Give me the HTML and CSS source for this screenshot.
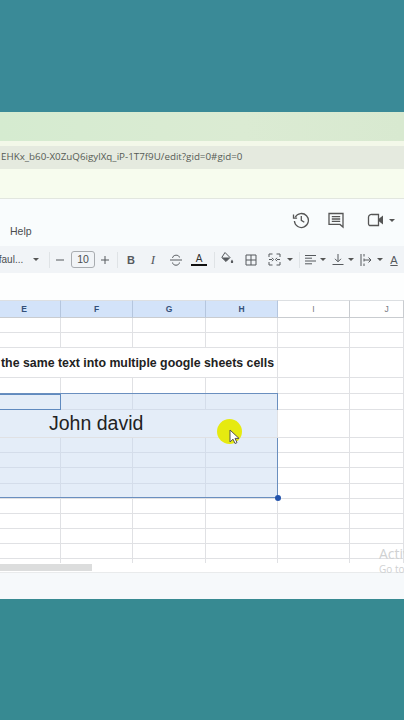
FILE: index.html
```html
<!DOCTYPE html>
<html lang="en">

<head>
    <meta charset="UTF-8">
    <meta name="viewport" content="width=device-width, initial-scale=1.0">
    <title>Google Sheets</title>
    <link rel="stylesheet" href="styles.css">
</head>

<body>
    <div class="band band-top"></div>
    <div class="window">
        <div class="tabs"></div>
        <div class="tabs-edge"></div>
        <div class="url">EHKx_b60-X0ZuQ6igylXq_iP-1T7f9U/edit?gid=0#gid=0</div>
        <div class="bookmarks"></div>

        <div class="menubar">
            <div class="help">Help</div>
            <div class="actions">
                <svg class="act-history" width="18" height="18" viewBox="0 0 18 18"><path d="M3.2 6.200A7 7 0 1 1 2.400 10" /><path d="M1.500 3.500v3.600h3.600" /><path d="M9.300 5v4.400l3 1.800" /></svg>
                <svg class="act-comment" width="18" height="18" viewBox="0 0 18 18"><path d="M2 2.500h14v13.500l-3-2.600H2z" /><path d="M4.800 5.600h8.400M4.800 8h8.400M4.800 10.400h8.400" /></svg>
                <svg class="act-video" width="18" height="18" viewBox="0 0 18 18"><path d="M6 3.500h6.500v11H3.500a2 2 0 0 1-1-1.500V6a3 3 0 0 1 3.500-2.500z" /><path class="solid" d="M12.500 8l4.500-3.500v9L12.500 10z" /></svg>
                <span class="caret act-caret"></span>
            </div>
        </div>

        <div class="toolbar">
            <span class="font-name">Defaul...</span>
            <span class="caret caret-font"></span>
            <span class="sep sep-font"></span>
            <svg class="tool t-minus" width="12" height="12" viewBox="0 0 12 12"><path d="M2 6h8" /></svg>
            <span class="size-box">10</span>
            <svg class="tool t-plus" width="12" height="12" viewBox="0 0 12 12"><path d="M2 6h8M6 2v8" /></svg>
            <span class="sep sep-plus"></span>
            <span class="glyph g-bold">B</span>
            <span class="glyph g-italic">I</span>
            <svg class="tool t-strike" width="14" height="14" viewBox="0 0 14 14"><path d="M1 7h12" /><path d="M3.600 5c0-3.600 6.800-3.600 6.800-.5M3.600 9.500c0 3.600 6.800 3.600 6.800 0" /></svg>
            <span class="glyph g-color">A</span>
            <span class="sep sep-color"></span>
            <svg class="tool t-fill" width="14" height="14" viewBox="0 0 14 14"><path d="M5 1.500L10 6.500 6 10.500 1.800 6.500z" /><path class="solid" d="M1.800 6.500H10L6 10.500z" /><path class="solid" d="M12 8.500c.8 1.200 1.200 1.800 1.200 2.400a1.200 1.200 0 0 1-2.400 0c0-.6.400-1.200 1.200-2.400z" /></svg>
            <svg class="tool t-borders" width="12" height="12" viewBox="0 0 12 12"><path d="M1 1h10v10H1zM6 1v10M1 6h10" /></svg>
            <svg class="tool t-merge" width="13" height="13" viewBox="0 0 13 13"><path d="M1 4V1h3.500M12 4V1H8.500M1 9v3h3.500M12 9v3H8.500M1 6.500h3M12 6.500H9M4 4.800L5.500 6.500 4 8.200M9 4.800L7.500 6.500 9 8.200" /></svg>
            <span class="caret caret-merge"></span>
            <span class="sep sep-merge"></span>
            <svg class="tool t-align" width="11" height="12" viewBox="0 0 11 12"><path d="M0 1.500h11M0 4.200h7M0 7h11M0 9.800h7" /></svg>
            <span class="caret caret-align"></span>
            <svg class="tool t-valign" width="12" height="13" viewBox="0 0 12 13"><path d="M6 1v7.500M3 5.800l3 3 3-3M0.500 11.500h11" /></svg>
            <span class="caret caret-valign"></span>
            <svg class="tool t-wrap" width="12" height="12" viewBox="0 0 12 12"><path d="M1 0v12M4 0v2.500M4 4.500v3M4 9.500V12M4 6h7M8.500 3.500L11 6 8.500 8.500" /></svg>
            <span class="caret caret-wrap"></span>
            <span class="glyph g-rotate">A</span>
        </div>

        <div class="gap"></div>

        <div class="sheet">
            <div class="head on head-e">E</div><div class="head on">F</div><div class="head on">G</div><div class="head on">H</div><div class="head">I</div><div class="head head-j">J</div>

            <div class="cell"></div><div class="cell"></div><div class="cell"></div><div class="cell"></div><div class="cell"></div><div class="cell"></div>
            <div class="cell"></div><div class="cell"></div><div class="cell"></div><div class="cell"></div><div class="cell"></div><div class="cell"></div>
            <div class="cell title">the same text into multiple google sheets cells</div><div class="cell"></div><div class="cell"></div>
            <div class="cell"></div><div class="cell"></div><div class="cell"></div><div class="cell"></div><div class="cell"></div><div class="cell"></div>
            <div class="cell"></div><div class="cell"></div><div class="cell"></div><div class="cell"></div><div class="cell"></div><div class="cell"></div>
            <div class="cell name">John david</div><div class="cell"></div><div class="cell"></div>
            <div class="cell"></div><div class="cell"></div><div class="cell"></div><div class="cell"></div><div class="cell"></div><div class="cell"></div>
            <div class="cell"></div><div class="cell"></div><div class="cell"></div><div class="cell"></div><div class="cell"></div><div class="cell"></div>
            <div class="cell"></div><div class="cell"></div><div class="cell"></div><div class="cell"></div><div class="cell"></div><div class="cell"></div>
            <div class="cell"></div><div class="cell"></div><div class="cell"></div><div class="cell"></div><div class="cell"></div><div class="cell"></div>
            <div class="cell"></div><div class="cell"></div><div class="cell"></div><div class="cell"></div><div class="cell"></div><div class="cell"></div>
            <div class="cell"></div><div class="cell"></div><div class="cell"></div><div class="cell"></div><div class="cell"></div><div class="cell"></div>
            <div class="cell"></div><div class="cell"></div><div class="cell"></div><div class="cell"></div><div class="cell"></div><div class="cell"></div>
            <div class="cell"></div><div class="cell"></div><div class="cell"></div><div class="cell"></div><div class="cell"></div><div class="cell"></div>
            <div class="cell end"></div><div class="cell end"></div><div class="cell end"></div><div class="cell end"></div><div class="cell end"></div><div class="cell end"></div>

            <!-- selection sits over the cells -->
            <div class="selection">
                <div class="active"></div>
                <div class="handle"></div>
            </div>
            <div class="pointer">
                <svg width="12" height="16" viewBox="0 0 12 16"><path d="M1 1v12l3-2.800 2 4.300 2-.9-2-4.200h4z" /></svg>
            </div>
        </div>

        <div class="hscroll"><div class="thumb"></div></div>
        <div class="status"></div>

        <div class="watermark">
            <div class="wm-big">Activate Windows</div>
            <div class="wm-small">Go to Settings to activate</div>
        </div>
    </div>
    <div class="band band-bottom"></div>
</body>

</html>
```

FILE: styles.css
```css
html,
body {
    margin: 0;
    overflow: hidden;
}

body {
    width: 404px;
    height: 720px;
    font-family: "Liberation Sans", Arial, sans-serif;
    background-color: #3a8a97;
}

.band {
    background-color: #3a8a97;
}

.band-top {
    height: 112px;
}

.band-bottom {
    height: 121px;
    background-color: #378a92;
}

.window {
    position: relative;
    height: 487px;
    overflow: hidden;
    background-color: #fafcfd;
}

.tabs {
    height: 29px;
    background: linear-gradient(90deg, #d5ebd0, #dbebd3 60%, #d8e9d0);
}

.tabs-edge {
    height: 5px;
    background-color: #f3f8e9;
}

.url {
    height: 23px;
    line-height: 22px;
    padding-left: 1px;
    font-family: "Open Sans", sans-serif;
    font-size: 9.800px;
    color: #555b55;
    white-space: nowrap;
    background-color: #e5eadf;
}

.bookmarks {
    height: 29px;
    background-color: #f7fcee;
    border-bottom: 1px solid #e2e6df;
}

.menubar {
    height: 47px;
    display: flex;
    justify-content: space-between;
    background-color: #f9fcfd;
}

.help {
    padding: 26px 0 0 10px;
    font-size: 10.500px;
    color: #4a4d50;
}

.actions {
    display: flex;
    align-items: flex-start;
    padding-top: 12px;
    padding-right: 9px;
}

.actions svg {
    fill: none;
    stroke: #555;
    stroke-width: 1.300;
}

.actions svg .solid {
    fill: #555;
    stroke: none;
}

.act-history {
    margin-right: 17px;
}

.act-video {
    margin-left: 21px;
}

.caret {
    width: 0;
    height: 0;
    flex: none;
    border-left: 3px solid transparent;
    border-right: 3px solid transparent;
    border-top: 3px solid #555;
}

.act-caret {
    margin: 8px 0 0 5px;
}

.toolbar {
    height: 27px;
    display: flex;
    align-items: center;
    overflow: hidden;
    white-space: nowrap;
    background-color: #f1f4f7;
}

.toolbar svg {
    flex: none;
    fill: none;
    stroke: #55595d;
    stroke-width: 1;
}

.toolbar svg .solid {
    fill: #55595d;
    stroke: none;
}

.font-name {
    flex: none;
    width: 47px;
    margin-left: -14px;
    font-size: 10px;
    color: #4a4d50;
}

.sep {
    flex: none;
    width: 1px;
    height: 16px;
    background-color: #dfe3e6;
}

.sep-font {
    margin-left: 10px;
}

.t-minus {
    margin-left: 4px;
}

.size-box {
    flex: none;
    width: 22px;
    height: 15px;
    margin-left: 5px;
    border: 1px solid #a8acb0;
    border-radius: 3px;
    font-size: 10.500px;
    line-height: 15px;
    text-align: center;
    color: #4a4d50;
}

.t-plus {
    margin-left: 4px;
}

.sep-plus {
    margin-left: 6px;
}

.glyph {
    flex: none;
    text-align: center;
    color: #55595d;
}

.g-bold {
    width: 12px;
    margin-left: 7px;
    font-size: 11px;
    font-weight: bold;
}

.g-italic {
    width: 12px;
    margin-left: 10px;
    font-family: "Liberation Serif", serif;
    font-size: 13px;
    font-style: italic;
}

.t-strike {
    margin-left: 10px;
}

.g-color {
    width: 16px;
    margin-left: 8px;
    font-size: 10px;
    line-height: 11px;
    color: #333;
    border-bottom: 2px solid #111;
}

.sep-color {
    margin-left: 7px;
}

.t-fill {
    margin-left: 5px;
    margin-bottom: 3px;
}

.t-borders {
    margin-left: 11px;
}

.t-merge {
    margin-left: 11px;
}

.caret-merge {
    margin-left: 6px;
}

.sep-merge {
    margin-left: 6px;
}

.t-align {
    margin-left: 5px;
}

.caret-align {
    margin-left: 4px;
}

.t-valign {
    margin-left: 6px;
}

.caret-valign {
    margin-left: 4px;
}

.t-wrap {
    margin-left: 6px;
}

.caret-wrap {
    margin-left: 5px;
}

.g-rotate {
    width: 10px;
    margin-left: 6px;
    font-size: 11px;
    text-decoration: underline;
}

.gap {
    height: 27px;
    background-color: #fdfefe;
}

.sheet {
    position: relative;
    height: 263px;
    display: grid;
    grid-template-columns: 61px 72px 73px 72px 72px 54px;
    grid-template-rows: 18px 15px 15px 30px 16px 16px 28px 15px 15px 16px 15px 15px 15px 15px 15px 4px;
    overflow: hidden;
    background-color: #fff;
}

.head {
    display: flex;
    align-items: center;
    justify-content: center;
    border-top: 1px solid #dcdfe2;
    border-right: 1px solid #c9ccd0;
    border-bottom: 1px solid #c9ccd0;
    font-size: 8.500px;
    color: #777b7f;
    box-sizing: border-box;
}

.head.on {
    background-color: #d3e3f9;
    font-weight: bold;
    color: #34507a;
    border-right-color: #b5c6de;
}

.head-e {
    padding-right: 12px;
}

.head-j {
    padding-left: 20px;
}

.cell {
    border-right: 1px solid #e0e1e4;
    border-bottom: 1px solid #e0e1e4;
    box-sizing: border-box;
}

.cell.end {
    border-bottom: none;
}

.title {
    grid-column: span 4;
    padding-left: 1px;
    font-size: 12.350px;
    line-height: 30px;
    font-weight: bold;
    white-space: nowrap;
    color: #222;
}

.name {
    position: relative;
    z-index: 1;
    grid-column: span 4;
    padding-left: 49px;
    font-size: 19.500px;
    line-height: 27px;
    white-space: nowrap;
    color: #222;
}

.selection {
    position: absolute;
    left: -2px;
    top: 93px;
    width: 280px;
    height: 105px;
    box-sizing: border-box;
    border: 1px solid #6a8fbf;
    background-color: rgba(198, 216, 240, 0.47);
}

.active {
    width: 62px;
    height: 16px;
    box-sizing: border-box;
    border: 1.500px solid #5f8abf;
}

.handle {
    position: absolute;
    right: -4px;
    bottom: -4px;
    width: 6px;
    height: 6px;
    border-radius: 50%;
    background-color: #2454ad;
}

.pointer {
    position: absolute;
    z-index: 2;
    left: 217px;
    top: 119px;
    width: 25px;
    height: 25px;
    border-radius: 50%;
    background-color: #e6ea10;
}

.pointer svg {
    position: absolute;
    left: 12px;
    top: 10px;
    fill: #fff;
    stroke: #555;
    stroke-width: 1;
}

.watermark {
    position: absolute;
    left: 379px;
    top: 433px;
    white-space: nowrap;
    color: #cfd1d2;
    font-family: "Open Sans", sans-serif;
}

.wm-big {
    font-size: 14px;
    line-height: 18px;
}

.wm-small {
    font-size: 10px;
    line-height: 13px;
}

.hscroll {
    height: 10px;
    padding-top: 1px;
    box-sizing: border-box;
    background-color: #fff;
    border-bottom: 1px solid #e9ebec;
}

.thumb {
    width: 92px;
    height: 7px;
    background-color: #dcdddd;
}

.status {
    height: 26px;
    background-color: #f6f9fb;
}
```
